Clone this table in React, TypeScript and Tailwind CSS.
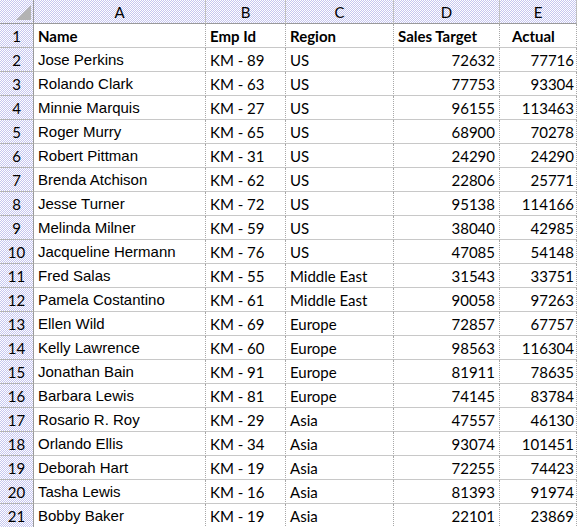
import React from 'react'

type Row = [string, string, string, number, number]

const rows: Row[] = [
  ['Jose Perkins', 'KM - 89', 'US', 72632, 77716],
  ['Rolando Clark', 'KM - 63', 'US', 77753, 93304],
  ['Minnie Marquis', 'KM - 27', 'US', 96155, 113463],
  ['Roger Murry', 'KM - 65', 'US', 68900, 70278],
  ['Robert Pittman', 'KM - 31', 'US', 24290, 24290],
  ['Brenda Atchison', 'KM - 62', 'US', 22806, 25771],
  ['Jesse Turner', 'KM - 72', 'US', 95138, 114166],
  ['Melinda Milner', 'KM - 59', 'US', 38040, 42985],
  ['Jacqueline Hermann', 'KM - 76', 'US', 47085, 54148],
  ['Fred Salas', 'KM - 55', 'Middle East', 31543, 33751],
  ['Pamela Costantino', 'KM - 61', 'Middle East', 90058, 97263],
  ['Ellen Wild', 'KM - 69', 'Europe', 72857, 67757],
  ['Kelly Lawrence', 'KM - 60', 'Europe', 98563, 116304],
  ['Jonathan Bain', 'KM - 91', 'Europe', 81911, 78635],
  ['Barbara Lewis', 'KM - 81', 'Europe', 74145, 83784],
  ['Rosario R. Roy', 'KM - 29', 'Asia', 47557, 46130],
  ['Orlando Ellis', 'KM - 34', 'Asia', 93074, 101451],
  ['Deborah Hart', 'KM - 19', 'Asia', 72255, 74423],
  ['Tasha Lewis', 'KM - 16', 'Asia', 81393, 91974],
  ['Bobby Baker', 'KM - 19', 'Asia', 22101, 23869],
]

// excel style "select all" dotted background
const hdrBg =
  'bg-[repeating-conic-gradient(#c6c6f0_0_25%,#ffffff_0_50%)] bg-[length:2px_2px]'

const grid = 'grid grid-cols-[34px_172px_80px_108px_106px_77px]'
const cell =
  'h-6 pt-[2px] border-b border-r border-[#c8c8c8] [border-right-style:dotted] [border-right-color:#a8a8a8] flex items-center overflow-hidden whitespace-nowrap'
const calibri = "font-['Lato','Liberation_Sans',sans-serif] text-[15px]"
const arial = "font-['Liberation_Sans',Arial,sans-serif] text-[15px]"

function RowNum({ n }: { n: number }) {
  return (
    <div
      className={`${hdrBg} ${calibri} h-6 pt-[2px] flex items-center justify-center border-b border-r border-b-[#b4b4b4] border-r-[#9a9a9a] text-black`}
    >
      {n}
    </div>
  )
}

export default function App() {
  const letters = ['A', 'B', 'C', 'D', 'E']

  return (
    <div className="w-[577px] h-[527px] overflow-hidden bg-white text-black">
      {/* column letters */}
      <div className={grid}>
        <div className={`${hdrBg} relative h-6 border-b border-r border-[#9a9a9a]`}>
          <svg className="absolute left-[16px] top-[5px]" width="15" height="15" viewBox="0 0 15 15">
            <polygon points="15,0 15,15 0,15" fill="#b3b3b3" />
          </svg>
        </div>
        {letters.map((l) => (
          <div
            key={l}
            className={`${hdrBg} ${calibri} h-6 pt-[1px] flex items-center justify-center border-b border-r border-b-[#9a9a9a] border-r-[#c0c0c0]`}
          >
            {l}
          </div>
        ))}
      </div>

      {/* header row */}
      <div className={grid}>
        <RowNum n={1} />
        <div className={`${cell} ${calibri} font-bold pl-1`}>Name</div>
        <div className={`${cell} ${calibri} font-bold pl-1`}>Emp Id</div>
        <div className={`${cell} ${calibri} font-bold pl-1`}>Region</div>
        <div className={`${cell} ${calibri} font-bold pl-1`}>Sales Target</div>
        <div className={`${cell} ${calibri} font-bold pl-3`}>Actual</div>
      </div>

      {rows.map((r, i) => (
        <div key={i} className={grid}>
          <RowNum n={i + 2} />
          <div className={`${cell} ${arial} pl-1`}>{r[0]}</div>
          <div className={`${cell} ${calibri} pl-1`}>{r[1]}</div>
          <div className={`${cell} ${calibri} pl-1`}>{r[2]}</div>
          <div className={`${cell} ${calibri} justify-end pr-1`}>{r[3]}</div>
          <div className={`${cell} ${calibri} justify-end pr-[2px]`}>{r[4]}</div>
        </div>
      ))}
    </div>
  )
}
